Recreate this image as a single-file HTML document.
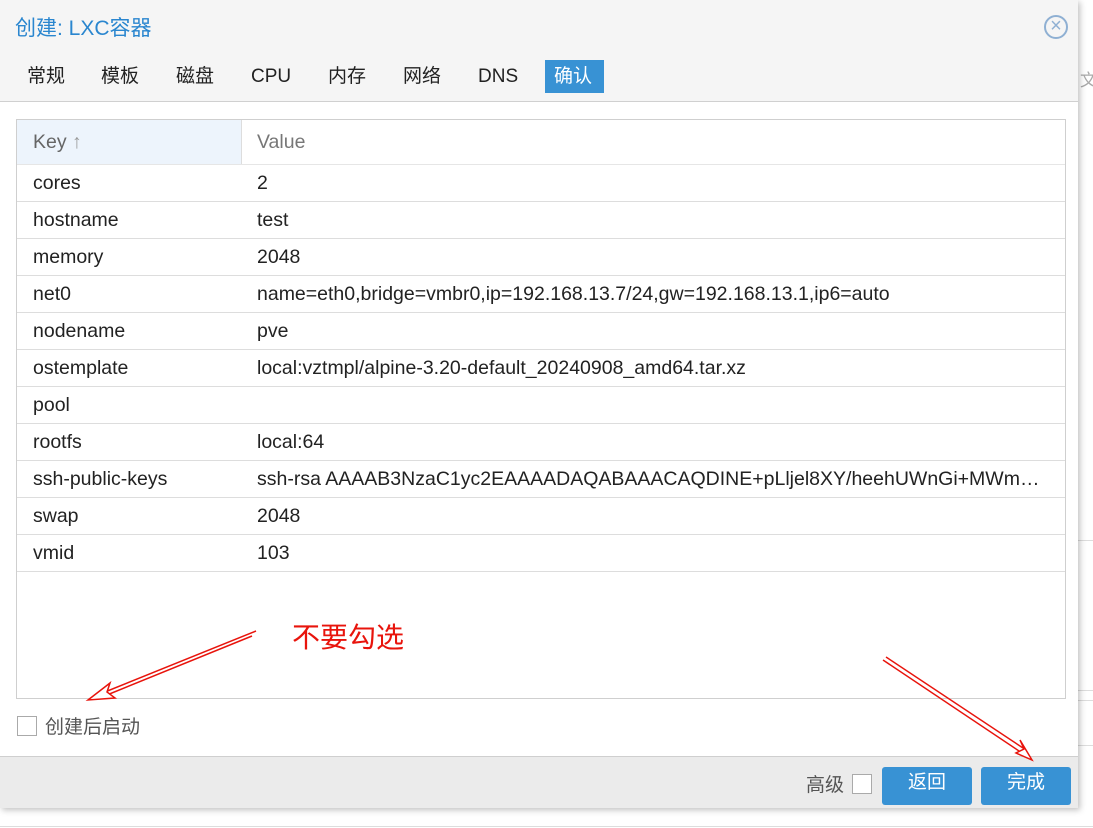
<!DOCTYPE html>
<html><head><meta charset="utf-8"><style>
*{margin:0;padding:0;box-sizing:border-box}
body{width:1093px;height:828px;background:#fff;font-family:"Liberation Sans","Noto Sans CJK SC",sans-serif;position:relative;overflow:hidden}
.dlg{position:absolute;left:0;top:0;width:1078px;height:808px;background:#f5f5f5;box-shadow:2px 2px 6px rgba(0,0,0,.25)}
.title{position:absolute;left:15px;top:12px;font-size:21px;color:#2a86cf;white-space:nowrap}
.close{position:absolute;left:1044px;top:15px;width:24px;height:24px;border:2px solid #8fb0d3;border-radius:50%;color:#8fb0d3;font-size:20px;line-height:19px;text-align:center}
.tabs{position:absolute;top:62px;left:0;height:34px}
.tab{position:absolute;top:-2px;height:33px;line-height:33px;font-size:19px;color:#222;padding:0 9px;white-space:nowrap}
.tab.on{background:#3892d4;color:#fff}
.tab span{position:relative;top:2px}
.body{position:absolute;left:0;top:101px;width:1078px;height:655px;background:#fff;border-top:1px solid #d0d0d0}
.grid{position:absolute;left:16px;top:17px;width:1050px;height:580px;border:1px solid #cfcfcf}
.hdr{height:45px;border-bottom:1px solid #e6e6e6;position:relative}
.hk{position:absolute;left:0;top:0;width:225px;height:44px;background:#edf4fc;border-right:1px solid #ddd;color:#666;font-size:19.5px;line-height:44px;padding-left:16px}
.hv{position:absolute;left:240px;top:0;line-height:44px;font-size:19.5px;color:#777}
.row{height:37px;border-bottom:1px solid #ddd;position:relative;font-size:19.5px;color:#222;line-height:37px}
.row span{position:absolute;left:16px}
.row b{font-weight:normal;position:absolute;left:240px;right:22px;white-space:nowrap;overflow:hidden;text-overflow:ellipsis}
.chk{position:absolute;width:20px;height:20px;border:1px solid #aaa;background:#fff}
.foot{position:absolute;left:0;top:756px;width:1078px;height:52px;background:#ebebeb;border-top:1px solid #cfcfcf}
.btn{position:absolute;top:10px;width:90px;height:38px;background:#3892d4;border-radius:3px;color:#fff;font-size:19px;text-align:center;line-height:32px}
.side{position:absolute;left:1078px;width:15px;height:1px;background:#ddd}
</style></head><body>
<div class="side" style="top:540px"></div><div class="side" style="top:690px"></div><div class="side" style="top:700px"></div><div class="side" style="top:745px"></div>
<div style="position:absolute;left:1080px;top:66px;font-size:17px;color:#aaa">文</div>
<div style="position:absolute;left:0;top:826px;width:1093px;height:1px;background:#ddd"></div>
<div class="dlg">
<div class="title">创建: LXC容器</div>
<div class="close">×</div>
<div class="tabs">
<div class="tab" style="left:18px">常规</div>
<div class="tab" style="left:92px">模板</div>
<div class="tab" style="left:167px">磁盘</div>
<div class="tab" style="left:242px">CPU</div>
<div class="tab" style="left:319px">内存</div>
<div class="tab" style="left:394px">网络</div>
<div class="tab" style="left:469px">DNS</div>
<div class="tab on" style="left:545px;width:59px">确认</div>
</div>
<div class="body">
<div class="grid">
<div class="hdr"><div class="hk">Key <span style="color:#999">↑</span></div><div class="hv">Value</div></div>
<div class="row"><span>cores</span><b>2</b></div>
<div class="row"><span>hostname</span><b>test</b></div>
<div class="row"><span>memory</span><b>2048</b></div>
<div class="row"><span>net0</span><b>name=eth0,bridge=vmbr0,ip=192.168.13.7/24,gw=192.168.13.1,ip6=auto</b></div>
<div class="row"><span>nodename</span><b>pve</b></div>
<div class="row"><span>ostemplate</span><b>local:vztmpl/alpine-3.20-default_20240908_amd64.tar.xz</b></div>
<div class="row"><span>pool</span><b></b></div>
<div class="row"><span>rootfs</span><b>local:64</b></div>
<div class="row"><span>ssh-public-keys</span><b>ssh-rsa AAAAB3NzaC1yc2EAAAADAQABAAACAQDINE+pLljel8XY/heehUWnGi+MWmkQx9aZ</b></div>
<div class="row"><span>swap</span><b>2048</b></div>
<div class="row"><span>vmid</span><b>103</b></div>
</div>
<div class="chk" style="left:17px;top:614px"></div>
<div style="position:absolute;left:45px;top:610px;font-size:19px;color:#555">创建后启动</div>
</div>
<div class="foot">
<div style="position:absolute;left:806px;top:13px;font-size:19px;color:#555">高级</div>
<div class="chk" style="left:852px;top:17px"></div>
<div class="btn" style="left:882px">返回</div>
<div class="btn" style="left:981px">完成</div>
</div>
</div>
<div style="position:absolute;left:292px;top:616px;font-size:28px;color:#e8140c">不要勾选</div>
<svg width="1093" height="828" style="position:absolute;left:0;top:0" fill="none" stroke="#e8140c" stroke-width="1.5">
<line x1="256" y1="631" x2="100" y2="694"/><line x1="252" y1="636" x2="102" y2="697"/>
<polygon points="88,700 110,683 107,692 115,698" fill="#fff"/>
<line x1="883" y1="660" x2="1022" y2="753"/><line x1="886" y1="657" x2="1026" y2="750"/>
<polygon points="1032,760 1020,740 1024,749 1016,753" fill="#fff"/>
</svg>
</body></html>
